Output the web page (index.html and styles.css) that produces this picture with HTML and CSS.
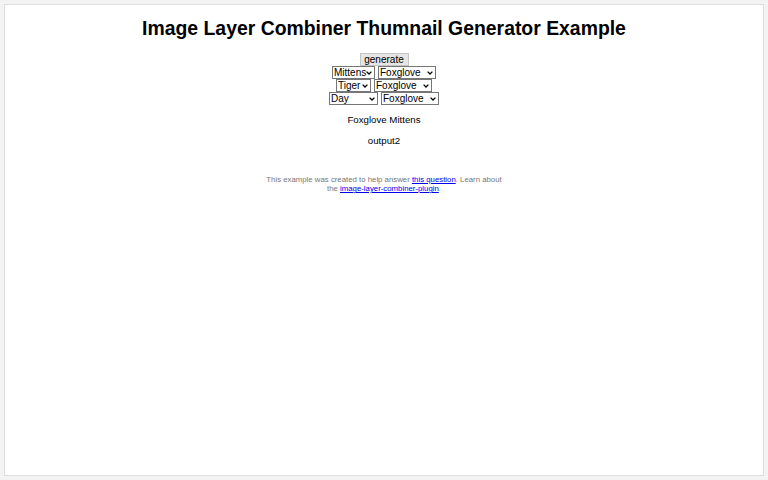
FILE: index.html
```html
<!DOCTYPE html>
<html lang="en">
<head>
  <meta charset="UTF-8">
  <title>Image Layer Combiner Thumnail Generator Example</title>
  <link rel="stylesheet" href="styles.css">
</head>
<body>
  <div class="page">
    <h1>Image Layer Combiner Thumnail Generator Example</h1>
    <div class="controls">
      <button id="generate" class="btn">generate</button>
      <div class="row">
        <span class="pick pick-cat">
          <select>
            <option>Mittens</option>
            <option>Tiger</option>
          </select>
          <svg class="caret" viewBox="0 0 6 4"><path d="M0.6 0.6 L3 3 L5.4 0.6"/></svg>
        </span>
        <span class="pick pick-flower">
          <select>
            <option>Foxglove</option>
            <option>Rose</option>
          </select>
          <svg class="caret" viewBox="0 0 6 4"><path d="M0.6 0.6 L3 3 L5.4 0.6"/></svg>
        </span>
      </div>
      <div class="row">
        <span class="pick pick-cat2">
          <select>
            <option>Tiger</option>
            <option>Mittens</option>
          </select>
          <svg class="caret" viewBox="0 0 6 4"><path d="M0.6 0.6 L3 3 L5.4 0.6"/></svg>
        </span>
        <span class="pick pick-flower">
          <select>
            <option>Foxglove</option>
            <option>Rose</option>
          </select>
          <svg class="caret" viewBox="0 0 6 4"><path d="M0.6 0.6 L3 3 L5.4 0.6"/></svg>
        </span>
      </div>
      <div class="row">
        <span class="pick pick-time">
          <select>
            <option>Day</option>
            <option>Night</option>
          </select>
          <svg class="caret" viewBox="0 0 6 4"><path d="M0.6 0.6 L3 3 L5.4 0.6"/></svg>
        </span>
        <span class="pick pick-flower">
          <select>
            <option>Foxglove</option>
            <option>Rose</option>
          </select>
          <svg class="caret" viewBox="0 0 6 4"><path d="M0.6 0.6 L3 3 L5.4 0.6"/></svg>
        </span>
      </div>
    </div>
    <p id="output1" class="output">Foxglove Mittens</p>
    <p id="output2" class="output">output2</p>
    <p class="note">
      This example was created to help answer <a href="#">this question</a>. Learn about
      the <a href="#">image-layer-combiner-plugin</a>.
    </p>
  </div>
</body>
</html>
```
FILE: styles.css
```css
html, body {
  height: 100%;
}
body {
  margin: 0;
  padding: 4px;
  box-sizing: border-box;
  background: #f3f3f3;
  font-family: 'Liberation Sans', Arial, sans-serif;
  color: #000;
}
.page {
  background: #fff;
  border: 1px solid #dcdcdc;
  height: 100%;
  box-sizing: border-box;
  text-align: center;
  padding-top: 11px;
}
h1 {
  font-size: 19.4px;
  font-weight: bold;
  margin: 0 0 13px 0;
  line-height: 24px;
}
.controls {
  display: flex;
  flex-direction: column;
  align-items: center;
}
.btn {
  font-family: 'Liberation Sans', Arial, sans-serif;
  font-size: 10px;
  width: 49px;
  height: 13px;
  padding: 0;
  line-height: 11px;
  background: #e6e6e6;
  border: 1px solid #c4c4c4;
  border-radius: 0;
  color: #000;
}
.row {
  display: flex;
  gap: 3px;
}
/* select with its own little chevron */
.pick {
  position: relative;
  display: block;
  height: 13px;
}
.pick select {
  appearance: none;
  -webkit-appearance: none;
  display: block;
  width: 100%;
  height: 13px;
  box-sizing: border-box;
  font-family: 'Liberation Sans', Arial, sans-serif;
  font-size: 10px;
  line-height: 11px;
  padding: 0 0 0 1px;
  border: 1px solid #767676;
  border-radius: 0;
  background: #fff;
  color: #000;
  outline: none;
}
.caret {
  position: absolute;
  right: 3px;
  top: 5px;
  width: 6px;
  height: 4px;
  fill: none;
  stroke: #000;
  stroke-width: 1.3;
  pointer-events: none;
}
.pick-cat { width: 43px; }
.pick-cat2 { width: 35px; }
.pick-time { width: 49px; }
.pick-flower { width: 58px; }
.output {
  font-size: 9.7px;
  line-height: 13px;
  margin: 8px 0 0 0;
}
.output + .output {
  margin-top: 8px;
}
.note {
  font-size: 7.8px;
  color: #777;
  width: 244px;
  margin: 28px auto 0 auto;
  line-height: 9px;
}
.note a {
  color: #00e;
}
```
